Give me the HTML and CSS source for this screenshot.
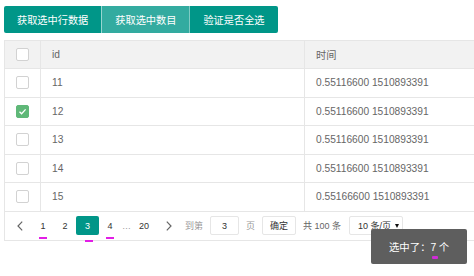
FILE: index.html
```html
<!DOCTYPE html>
<html lang="zh-CN">
<head>
<meta charset="utf-8">
<title>table</title>
<link rel="stylesheet" href="styles.css">
</head>
<body>
<div class="toolbar">
  <span class="btn">获取选中行数据</span>
  <span class="btn btn-hover">获取选中数目</span>
  <span class="btn btn-last">验证是否全选</span>
</div>
<div class="grid">
  <div class="row head">
    <div class="c-chk"><span class="chk"></span></div>
    <div class="c-id">id</div>
    <div class="c-time">时间</div>
  </div>
  <div class="row">
    <div class="c-chk"><span class="chk"></span></div>
    <div class="c-id">11</div>
    <div class="c-time">0.55116600 1510893391</div>
  </div>
  <div class="row">
    <div class="c-chk"><span class="chk on"><svg viewBox="0 0 13 13" width="13" height="13"><polyline points="3.5,6.8 5.6,8.8 9.6,4.4" fill="none" stroke="#fff" stroke-width="1.3"/></svg></span></div>
    <div class="c-id">12</div>
    <div class="c-time">0.55116600 1510893391</div>
  </div>
  <div class="row">
    <div class="c-chk"><span class="chk"></span></div>
    <div class="c-id">13</div>
    <div class="c-time">0.55116600 1510893391</div>
  </div>
  <div class="row">
    <div class="c-chk"><span class="chk"></span></div>
    <div class="c-id">14</div>
    <div class="c-time">0.55116600 1510893391</div>
  </div>
  <div class="row">
    <div class="c-chk"><span class="chk"></span></div>
    <div class="c-id">15</div>
    <div class="c-time">0.55166600 1510893391</div>
  </div>
  <div class="pager">
    <span class="pg pg-arrow"><svg viewBox="0 0 6 10" width="6" height="10"><polyline points="5.2,0.6 1,5 5.2,9.4" fill="none" stroke="#666" stroke-width="1.2"/></svg></span>
    <span class="pg mark">1</span>
    <span class="pg">2</span>
    <span class="pg pg-cur mark mark-low">3</span>
    <span class="pg mark">4</span>
    <span class="pg pg-spr">…</span>
    <span class="pg pg-wide">20</span>
    <span class="pg pg-arrow pg-next"><svg viewBox="0 0 6 10" width="6" height="10"><polyline points="0.8,0.6 5,5 0.8,9.4" fill="none" stroke="#666" stroke-width="1.2"/></svg></span>
    <span class="lbl">到第</span>
    <span class="inp">3</span>
    <span class="lbl">页</span>
    <span class="ok">确定</span>
    <span class="count">共 100 条</span>
    <span class="sel">10 条/页<i class="caret"></i></span>
  </div>
</div>
<div class="msg">选中了：<span class="mark-seven">7</span> 个</div>
</body>
</html>
```

FILE: styles.css
```css
html, body {
  margin: 0;
  padding: 0;
  background: #fff;
  overflow: hidden;
  width: 474px;
  height: 276px;
}
body {
  position: relative;
  font-family: "Liberation Sans", "Noto Sans CJK SC", sans-serif;
  font-size: 10.2px;
  color: #666;
}
.toolbar {
  display: flex;
  padding: 6px 0 0 4px;
  height: 27px;
}
.btn {
  display: block;
  height: 27px;
  line-height: 27px;
  padding: 0 13px;
  background: #009688;
  color: #fff;
  font-family: "Noto Sans CJK SC", sans-serif;
  font-size: 10.2px;
  white-space: nowrap;
  border-left: 1px solid rgba(255,255,255,.5);
}
.btn:first-child {
  border-left: none;
  border-radius: 2px 0 0 2px;
}
.btn-hover {
  background: #33aba0;
}
.btn-last {
  border-radius: 0 2px 2px 0;
}
.grid {
  margin: 7px 0 0 4px;
  width: 490px;
  border: 1px solid #e6e6e6;
}
.row {
  display: flex;
  height: 28.5px;
  box-sizing: border-box;
  border-bottom: 1px solid #e6e6e6;
  align-items: stretch;
}
.row.head {
  height: 28px;
  background: #f2f2f2;
}
.row > div {
  display: flex;
  align-items: center;
  box-sizing: border-box;
}
.c-chk {
  width: 35px;
  justify-content: center;
}
.c-id {
  width: 264px;
  padding-left: 11px;
  border-left: 1px solid #e6e6e6;
}
.c-time {
  flex: 1;
  padding-left: 11px;
  border-left: 1px solid #e6e6e6;
}
.chk {
  display: block;
  width: 13px;
  height: 13px;
  box-sizing: border-box;
  border: 1px solid #d2d2d2;
  border-radius: 2px;
  background: #fff;
}
.chk.on {
  border-color: #5fb878;
  background: #5fb878;
}
.chk.on svg {
  display: block;
  margin: -1px;
}
.pager {
  display: flex;
  align-items: center;
  height: 28.5px;
  padding-left: 3px;
  font-size: 9px;
  color: #333;
  white-space: nowrap;
}
.pg {
  position: relative;
  display: flex;
  align-items: center;
  justify-content: center;
  width: 22px;
  height: 19px;
  box-sizing: border-box;
  border-radius: 2px;
}
.pg-arrow {
  width: 24px;
}
.pg-next {
  width: 26px;
}
.pg-cur {
  width: 23px;
  background: #009688;
  color: #fff;
}
.pg-spr {
  width: 11px;
  color: #999;
}
.pg-wide {
  width: 24px;
}
.mark::after {
  content: "";
  position: absolute;
  left: 50%;
  margin-left: -4px;
  width: 8px;
  height: 2px;
  top: calc(100% + 2px);
  background: #e21ee6;
}
.mark-low::after {
  top: calc(100% + 5px);
  margin-left: -3px;
}
.lbl {
  margin-left: 3px;
  color: #999;
  font-family: "Noto Sans CJK SC", sans-serif;
  font-size: 9px;
}
.inp {
  display: flex;
  align-items: center;
  justify-content: center;
  margin: 0 7px;
  width: 29px;
  height: 19px;
  box-sizing: border-box;
  border: 1px solid #e6e6e6;
  border-radius: 2px;
  color: #333;
}
.inp + .lbl {
  margin-left: 0;
}
.ok {
  display: flex;
  align-items: center;
  justify-content: center;
  margin-left: 7px;
  width: 34px;
  height: 19px;
  box-sizing: border-box;
  border: 1px solid #e6e6e6;
  border-radius: 2px;
  color: #333;
  font-family: "Noto Sans CJK SC", sans-serif;
  font-size: 9px;
}
.count {
  margin-left: 7px;
  color: #666;
}
.sel {
  display: flex;
  align-items: center;
  flex: none;
  margin-left: 8px;
  width: 54px;
  height: 19px;
  padding-left: 8px;
  box-sizing: border-box;
  border: 1px solid #e6e6e6;
  border-radius: 2px;
  color: #333;
  white-space: nowrap;
}
.caret {
  display: block;
  flex: none;
  margin-left: 4px;
  width: 0;
  height: 0;
  border-left: 2.5px solid transparent;
  border-right: 2.5px solid transparent;
  border-top: 4px solid #111;
}
.msg {
  position: absolute;
  left: 371px;
  top: 229px;
  width: 96px;
  height: 35px;
  line-height: 35px;
  text-align: center;
  background: #5e5e5e;
  color: #fff;
  border-radius: 2px;
  font-family: "Noto Sans CJK SC", "Liberation Sans", sans-serif;
  font-size: 10.4px;
}
.mark-seven {
  position: relative;
  font-family: "Liberation Sans", sans-serif;
}
.mark-seven::after {
  content: "";
  position: absolute;
  left: 1px;
  top: 14px;
  width: 6px;
  height: 3px;
  border-radius: 1px;
  background: #d02bd8;
}
```
